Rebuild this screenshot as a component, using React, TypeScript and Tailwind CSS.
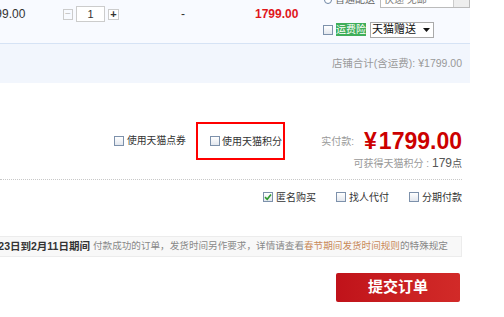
import React from "react";

const FONT = { fontFamily: '"Liberation Sans", "Noto Sans CJK SC", sans-serif' };

function Box({ checked = false }: { checked?: boolean }) {
  return (
    <span className="inline-flex w-[10px] h-[10px] shrink-0 border border-[#7d91ab] bg-gradient-to-b from-white to-[#e3e7ee] items-center justify-center">
      {checked && (
        <svg width="8" height="8" viewBox="0 0 8 8">
          <path d="M1 4.2 L3.2 6.3 L7 1.5" stroke="#2e9b2e" strokeWidth="1.6" fill="none" />
        </svg>
      )}
    </span>
  );
}

export default function App() {
  return (
    <div className="w-[504px] h-[317px] bg-white overflow-hidden" style={FONT}>
      {/* top cart row */}
      <div className="w-[470px] h-[44px] bg-[#f8faff] border-b border-[#d6e3f5] flex overflow-hidden">
        <div className="w-[63px] h-[28px] flex items-center">
          <span className="ml-[-18px] text-[12px] text-[#333]">1799.00</span>
        </div>
        <div className="w-[118px] h-[28px] flex items-center">
          <span className="w-[10px] h-[11px] border border-[#ccc] flex items-center justify-center text-[10px] leading-none text-[#bbb]">−</span>
          <span className="ml-[3px] w-[29px] h-[16px] border border-[#ccc] bg-white flex items-center justify-center text-[11px] text-[#333]">1</span>
          <span className="ml-[3px] w-[11px] h-[11px] border border-[#ccc] bg-white flex items-center justify-center text-[11px] leading-none text-[#333] font-bold">+</span>
        </div>
        <div className="w-[74px] h-[28px] flex items-center text-[12px] text-[#333]">-</div>
        <div className="w-[65px] h-[28px] flex items-center text-[12px] font-bold text-[#e0161b]">1799.00</div>
        <div className="flex-1 flex flex-col">
          <div className="mt-[-9px] h-[17px] flex items-center">
            <span className="ml-[4px] w-[8px] h-[8px] rounded-full border border-[#6f86a6] bg-white"></span>
            <span className="ml-[3px] w-[45px] text-[10px] text-[#666] whitespace-nowrap overflow-hidden">普通配送</span>
            <span className="w-[90px] h-[17px] border border-[#bbb] bg-white flex items-center">
              <span className="flex-1 pl-[3px] text-[10px] text-[#777]">快递 免邮</span>
              <span className="w-[16px] h-full bg-[#eee] border-l border-[#ccc]"></span>
            </span>
          </div>
          <div className="mt-[14px] h-[15px] flex items-center">
            <span className="ml-[3px]"><Box /></span>
            <span className="ml-[3px] w-[30px] h-[13px] bg-[#3fae5a] text-white text-[10px] leading-[13px] text-center">运费险</span>
            <span className="ml-[4px] w-[64px] h-[16px] border border-[#aaa] bg-white flex items-center">
              <span className="flex-1 pl-[1px] text-[11px] leading-none text-[#111] whitespace-nowrap">天猫赠送</span>
              <span className="w-[14px] h-full flex items-center justify-center">
                <svg width="7" height="4" viewBox="0 0 7 4"><path d="M0 0 H7 L3.5 4 Z" fill="#111" /></svg>
              </span>
            </span>
          </div>
        </div>
      </div>
      <div className="w-[470px] h-[39px] bg-[#f2f6fd] flex items-center justify-end pr-[8px] text-[10.5px] text-[#999]">
        店铺合计(含运费): ¥1799.00
      </div>

      {/* options & total */}
      <div className="w-[462px]">
        <div className="mt-[39px] flex items-start">
          <div className="ml-[114px] w-[82px] h-[38px] flex items-center">
            <Box />
            <span className="ml-[3px] text-[9.8px] text-[#333] whitespace-nowrap">使用天猫点券</span>
          </div>
          <div className="w-[89px] h-[38px] border-2 border-[#f00] flex items-center pl-[12px]">
            <Box />
            <span className="ml-[2px] text-[10px] text-[#333] whitespace-nowrap">使用天猫积分</span>
          </div>
          <div className="flex-1 flex flex-col items-end">
            <div className="h-[38px] flex items-center">
              <span className="text-[10px] text-[#999] mr-[10px]">实付款:</span>
              <span className="text-[23px] font-bold text-[#cc0000] leading-none">¥<span className="ml-[2px]">1799.00</span></span>
            </div>
            <div className="mt-[-3px] h-[12px] flex items-center text-[10px] text-[#999] whitespace-nowrap">
              可获得天猫积分 :<span className="ml-[3px] text-[12px] text-[#555]">179</span><span className="text-[#555]">点</span>
            </div>
          </div>
        </div>
        <div className="mt-[10px] border-t border-dotted border-[#c8c8c8]"></div>
        <div className="mt-[10px] h-[14px] flex items-center justify-end gap-[20px]">
          {[
            ["匿名购买", true],
            ["找人代付", false],
            ["分期付款", false],
          ].map(([t, c]) => (
            <div key={t as string} className="flex items-center">
              <Box checked={c as boolean} />
              <span className="ml-[3px] text-[10px] text-[#333] whitespace-nowrap">{t as string}</span>
            </div>
          ))}
        </div>
        <div className="mt-[32px] h-[21px] border-y border-r border-[#ececec] bg-[#f8f8f8] flex items-center overflow-hidden whitespace-nowrap text-[9.6px] text-[#888]">
          <span className="ml-[-18px] font-bold text-[#333] text-[10.5px]">1月23日到2月11日期间</span>
          <span className="ml-[3px]">付款成功的订单，发货时间另作要求，详情请查看</span>
          <span className="text-[#c98a5a]">春节期间发货时间规则</span>
          <span>的特殊规定</span>
        </div>
        <div className="mt-[16px] ml-[336px] w-[124px] h-[29px] rounded-[2px] bg-gradient-to-r from-[#c0121a] to-[#d22a28] flex items-center justify-center text-white text-[15px] font-bold">
          提交订单
        </div>
      </div>
    </div>
  );
}
